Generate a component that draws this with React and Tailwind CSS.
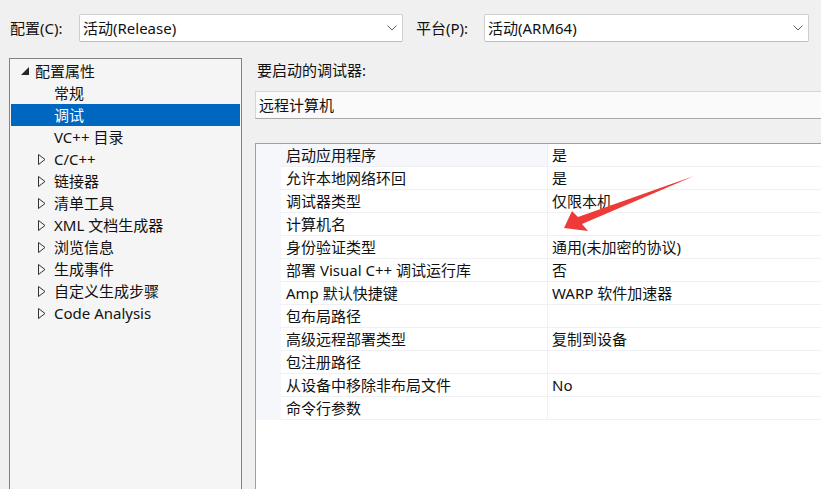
import React from "react";

const treeItems = [
  { label: "常规" },
  { label: "调试", selected: true },
  { label: "VC++ 目录" },
  { label: "C/C++", expandable: true },
  { label: "链接器", expandable: true },
  { label: "清单工具", expandable: true },
  { label: "XML 文档生成器", expandable: true },
  { label: "浏览信息", expandable: true },
  { label: "生成事件", expandable: true },
  { label: "自定义生成步骤", expandable: true },
  { label: "Code Analysis", expandable: true },
];

const props = [
  ["启动应用程序", "是"],
  ["允许本地网络环回", "是"],
  ["调试器类型", "仅限本机"],
  ["计算机名", ""],
  ["身份验证类型", "通用(未加密的协议)"],
  ["部署 Visual C++ 调试运行库", "否"],
  ["Amp 默认快捷键", "WARP 软件加速器"],
  ["包布局路径", ""],
  ["高级远程部署类型", "复制到设备"],
  ["包注册路径", ""],
  ["从设备中移除非布局文件", "No"],
  ["命令行参数", ""],
];

function Chevron() {
  return (
    <svg width="10" height="6" viewBox="0 0 10 6" className="shrink-0">
      <path d="M0.5 0.5 L5 5 L9.5 0.5" fill="none" stroke="#5f5f5f" strokeWidth="1" />
    </svg>
  );
}

function Combo({ value, width }) {
  return (
    <div
      className={`h-[28px] bg-white border border-[#cfcfcf] border-b-[#bdbdbd] rounded-[2px] flex items-center pl-[3px] pr-[5px] ${width}`}
    >
      <span className="flex-1">{value}</span>
      <Chevron />
    </div>
  );
}

function Collapsed() {
  return (
    <svg width="8" height="11" viewBox="0 0 8 11" className="shrink-0">
      <path d="M0.5 0.5 L7 5.5 L0.5 10.5 Z" fill="none" stroke="#333" strokeWidth="1" />
    </svg>
  );
}

function Expanded() {
  return (
    <svg width="8" height="8" viewBox="0 0 8 8" className="shrink-0">
      <path d="M8 0 L8 8 L0 8 Z" fill="#262626" />
    </svg>
  );
}

export default function App() {
  return (
    <div
      className="relative w-[821px] h-[489px] overflow-hidden bg-[#f0f0f0] text-[15px] text-[#111]"
      style={{ fontFamily: '"Noto Sans", "Noto Sans CJK SC", sans-serif' }}
    >
      {/* config / platform */}
      <div className="flex items-center pt-[14px] h-[42px]">
        <span className="w-[79px] pl-[10px]">配置(C):</span>
        <Combo value="活动(Release)" width="w-[324px]" />
        <span className="w-[81px] pl-[13px]">平台(P):</span>
        <Combo value="活动(ARM64)" width="w-[325px]" />
      </div>

      <div className="flex mt-[16px]">
        {/* tree */}
        <div className="ml-[9px] w-[233px] h-[440px] border border-[#838383] bg-[#f5f5f5] pt-[1px] px-[1px] shrink-0">
          <div className="h-[22px] flex items-center">
            <span className="w-[24px] flex justify-end pr-[6px]">
              <Expanded />
            </span>
            <span>配置属性</span>
          </div>
          {treeItems.map((it) => (
            <div
              key={it.label}
              className={`h-[22px] flex items-center ${it.selected ? "bg-[#0067c0] text-white" : ""}`}
            >
              <span className="w-[43px] flex justify-end pr-[8px]">
                {it.expandable && <Collapsed />}
              </span>
              <span>{it.label}</span>
            </div>
          ))}
        </div>

        {/* right panel */}
        <div className="ml-[13px] w-[600px] shrink-0">
          <div className="h-[24px] flex items-center pl-[2px]">要启动的调试器:</div>
          <div className="mt-[9px] h-[28px] bg-[#fafafa] border border-[#d4d4d4] border-b-[#a9a9a9] flex items-center pl-[3px]">
            远程计算机
          </div>
          <div className="mt-[24px] h-[360px] bg-white border-t border-l border-[#a0a0a0]">
            {props.map(([name, value], i) => (
              <div key={name} className="flex h-[23px]">
                <div className="w-[25px] bg-[#f5f7fb] shrink-0" />
                <div
                  className={`w-[267px] shrink-0 flex items-center pl-[5px] border-b border-r border-[#eef0f4] ${
                    i === 0 ? "bg-[#f5f7fb]" : ""
                  }`}
                >
                  {name}
                </div>
                <div className="flex-1 flex items-center pl-[4px] border-b border-[#eef0f4]">
                  {value}
                </div>
              </div>
            ))}
          </div>
        </div>
      </div>

      {/* red annotation arrow */}
      <svg
        className="absolute top-0 left-0 pointer-events-none"
        width="821"
        height="489"
        viewBox="0 0 821 489"
      >
        <path
          d="M564 228 L572 211 L578 217 L694 176 L582 224 L588 231 Z"
          fill="#ef3a3a"
        />
      </svg>
    </div>
  );
}
